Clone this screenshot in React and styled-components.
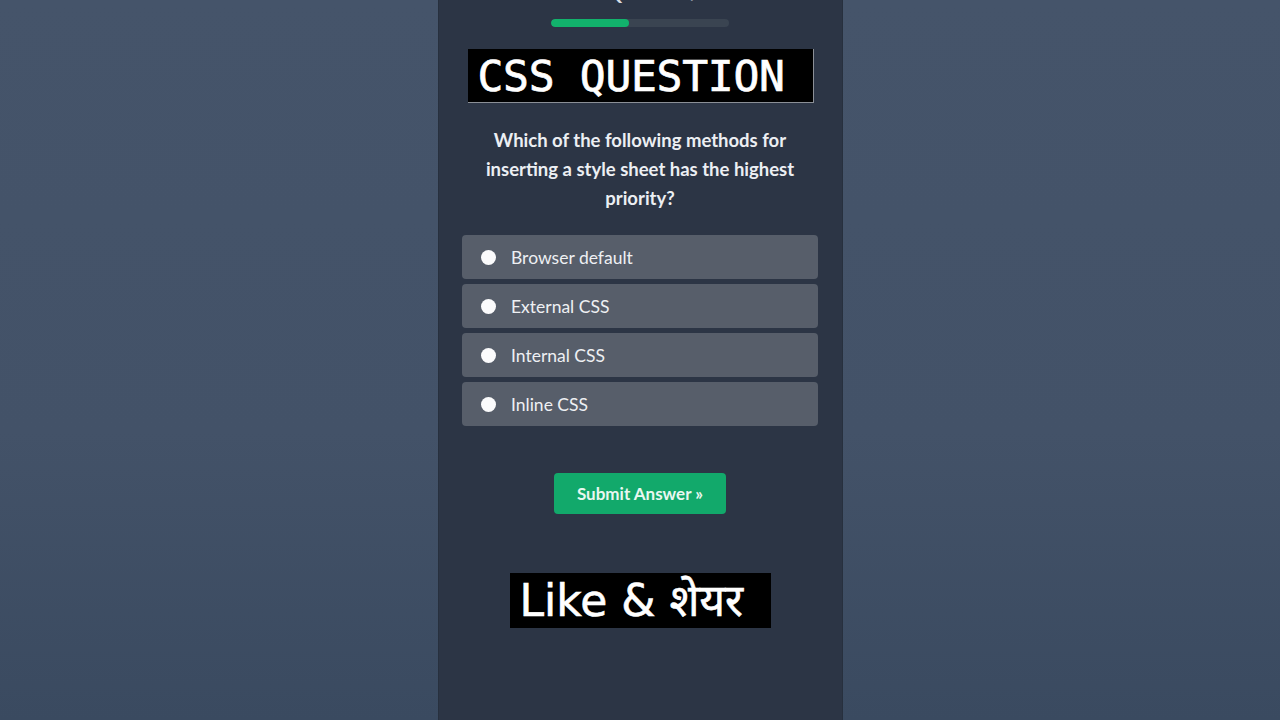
import React, { useState } from 'react'
import styled, { createGlobalStyle } from 'styled-components'

const OPTIONS = ['Browser default', 'External CSS', 'Internal CSS', 'Inline CSS']

const GlobalStyle = createGlobalStyle`
  html, body {
    margin: 0;
    padding: 0;
    height: 100%;
  }
  body {
    background: linear-gradient(180deg, #45546a 0%, #435268 60%, #3a4a60 100%);
    font-family: "Lato", "Noto Sans", sans-serif;
    overflow: hidden;
  }
`

const App = () => {
  const [selected, setSelected] = useState(null)
  const progress = 44

  return (
    <>
      <GlobalStyle />
      <Page>
        <Screen>
          <QuizHeader>CSS QUIZ 4 / 9</QuizHeader>
          <ProgressTrack>
            <ProgressFill style={{ width: `${progress}%` }} />
          </ProgressTrack>
          <TitleBanner>CSS QUESTION</TitleBanner>
          <Question>
            Which of the following methods for inserting a style sheet has the highest priority?
          </Question>
          <OptionList>
            {OPTIONS.map((label, idx) => (
              <Option key={label} onClick={() => setSelected(idx)}>
                <Radio $checked={selected === idx} />
                <OptionLabel>{label}</OptionLabel>
              </Option>
            ))}
          </OptionList>
          <SubmitButton type="button">Submit Answer »</SubmitButton>
          <ShareBanner>Like &amp; शेयर</ShareBanner>
        </Screen>
      </Page>
    </>
  )
}

const Page = styled.main`
  display: flex;
  justify-content: center;
  height: 720px;
`

const Screen = styled.section`
  width: 403px;
  height: 720px;
  display: flex;
  flex-direction: column;
  align-items: center;
  background: #2c3545;
  box-shadow: -1px 0 0 #27303e, 1px 0 0 #27303e;
  box-sizing: border-box;
  overflow: hidden;
`

/* page heading scrolled mostly out of view */
const QuizHeader = styled.div`
  margin-top: -19px;
  height: 23px;
  line-height: 23px;
  color: #d9dde3;
  font-size: 20px;
  font-weight: 700;
  letter-spacing: 2px;
`

const ProgressTrack = styled.div`
  width: 178px;
  height: 8px;
  margin-top: 15px;
  border-radius: 4px;
  background: #3a4451;
  overflow: hidden;
`

const ProgressFill = styled.div`
  height: 100%;
  border-radius: 4px;
  background: #12b26c;
`

const TitleBanner = styled.h1`
  align-self: flex-start;
  margin: 22px 0 0 29px;
  width: 346px;
  height: 54px;
  padding-left: 10px;
  box-sizing: border-box;
  background: #000;
  border-right: 1px solid #8b8f96;
  border-bottom: 1px solid #8b8f96;
  color: #fff;
  font-family: "DejaVu Sans Mono", monospace;
  font-weight: 400;
  font-size: 43px;
  line-height: 54px;
  letter-spacing: -0.3px;
  -webkit-text-stroke: 0.7px #fff;
  white-space: nowrap;
`

const Question = styled.p`
  width: 330px;
  margin: 23px 0 0;
  color: #eceff3;
  font-family: "Lato", "Noto Sans", sans-serif;
  font-weight: 700;
  font-size: 18.5px;
  line-height: 29px;
  text-align: center;
`

const OptionList = styled.div`
  display: flex;
  flex-direction: column;
  gap: 5px;
  width: 356px;
  margin-top: 22px;
`

const Option = styled.label`
  display: flex;
  align-items: center;
  height: 44px;
  padding-left: 19px;
  border-radius: 4px;
  background: #575e6a;
  cursor: pointer;
`

const Radio = styled.span`
  width: 15px;
  height: 15px;
  border-radius: 50%;
  background: ${(p) => (p.$checked ? '#12b26c' : '#fbfbfc')};
  flex-shrink: 0;
`

const OptionLabel = styled.span`
  margin-left: 15px;
  color: #eef0f3;
  font-family: "Lato", "Noto Sans", sans-serif;
  font-size: 17.5px;
`

const SubmitButton = styled.button`
  margin-top: 47px;
  width: 172px;
  height: 41px;
  border: 0;
  border-radius: 4px;
  background: #12a96b;
  color: #e9f7f0;
  font-family: "Lato", "Noto Sans", sans-serif;
  font-weight: 700;
  font-size: 17px;
  cursor: pointer;
`

const ShareBanner = styled.div`
  margin-top: 59px;
  width: 261px;
  height: 55px;
  padding-left: 10px;
  box-sizing: border-box;
  background: #000;
  color: #fff;
  font-family: "DejaVu Sans", "Noto Sans", sans-serif;
  font-size: 44px;
  line-height: 55px;
  -webkit-text-stroke: 0.6px #fff;
  white-space: nowrap;
  overflow: hidden;
`

export default App
